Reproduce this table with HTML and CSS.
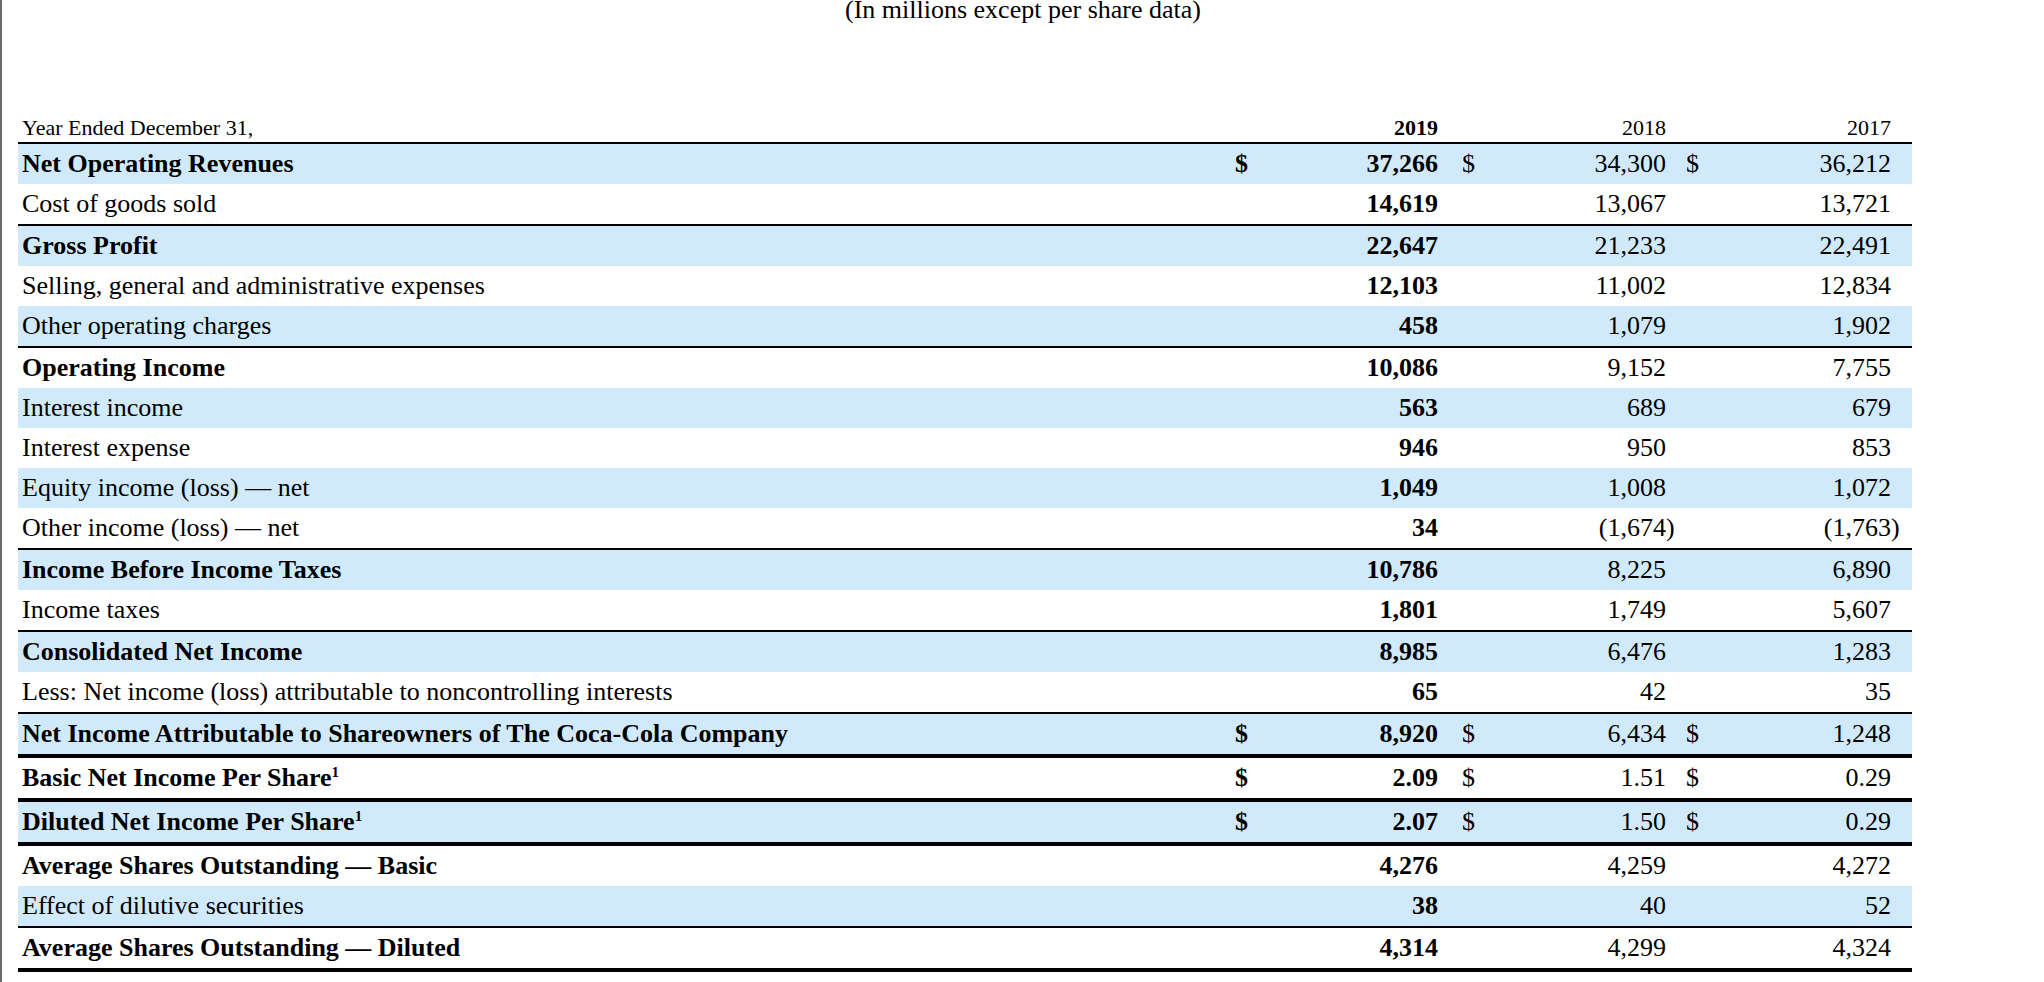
FILE: index.html
```html
<!DOCTYPE html>
<html lang="en">
<head>
<meta charset="utf-8">
<title>Consolidated Statements of Income</title>
<link rel="stylesheet" href="styles.css">
</head>
<body>
<div class="page">
  <div class="title">(In millions except per share data)</div>
  <div class="wrap">
    <table class="fin">
      <colgroup>
        <col class="c-label">
        <col class="c-d1">
        <col class="c-v1">
        <col class="c-d2">
        <col class="c-v2">
        <col class="c-d3">
        <col class="c-v3">
      </colgroup>
      <thead>
        <tr>
          <th class="lbl">Year Ended December 31,</th>
          <th></th>
          <th class="num b">2019</th>
          <th></th>
          <th class="num">2018</th>
          <th></th>
          <th class="num last">2017</th>
        </tr>
      </thead>
      <tbody>
        <tr class="alt b">
          <td class="lbl">Net Operating Revenues</td>
          <td class="d1">$</td><td class="num v1">37,266</td>
          <td class="d2">$</td><td class="num">34,300</td>
          <td class="d3">$</td><td class="num last">36,212</td>
        </tr>
        <tr>
          <td class="lbl">Cost of goods sold</td>
          <td></td><td class="num v1">14,619</td>
          <td></td><td class="num">13,067</td>
          <td></td><td class="num last">13,721</td>
        </tr>
        <tr class="alt b top">
          <td class="lbl">Gross Profit</td>
          <td></td><td class="num v1">22,647</td>
          <td></td><td class="num">21,233</td>
          <td></td><td class="num last">22,491</td>
        </tr>
        <tr>
          <td class="lbl">Selling, general and administrative expenses</td>
          <td></td><td class="num v1">12,103</td>
          <td></td><td class="num">11,002</td>
          <td></td><td class="num last">12,834</td>
        </tr>
        <tr class="alt">
          <td class="lbl">Other operating charges</td>
          <td></td><td class="num v1">458</td>
          <td></td><td class="num">1,079</td>
          <td></td><td class="num last">1,902</td>
        </tr>
        <tr class="b top">
          <td class="lbl">Operating Income</td>
          <td></td><td class="num v1">10,086</td>
          <td></td><td class="num">9,152</td>
          <td></td><td class="num last">7,755</td>
        </tr>
        <tr class="alt">
          <td class="lbl">Interest income</td>
          <td></td><td class="num v1">563</td>
          <td></td><td class="num">689</td>
          <td></td><td class="num last">679</td>
        </tr>
        <tr>
          <td class="lbl">Interest expense</td>
          <td></td><td class="num v1">946</td>
          <td></td><td class="num">950</td>
          <td></td><td class="num last">853</td>
        </tr>
        <tr class="alt">
          <td class="lbl">Equity income (loss) — net</td>
          <td></td><td class="num v1">1,049</td>
          <td></td><td class="num">1,008</td>
          <td></td><td class="num last">1,072</td>
        </tr>
        <tr>
          <td class="lbl">Other income (loss) — net</td>
          <td></td><td class="num v1">34</td>
          <td></td><td class="num">(1,674<span class="cp">)</span></td>
          <td></td><td class="num last">(1,763<span class="cp">)</span></td>
        </tr>
        <tr class="alt b top">
          <td class="lbl">Income Before Income Taxes</td>
          <td></td><td class="num v1">10,786</td>
          <td></td><td class="num">8,225</td>
          <td></td><td class="num last">6,890</td>
        </tr>
        <tr>
          <td class="lbl">Income taxes</td>
          <td></td><td class="num v1">1,801</td>
          <td></td><td class="num">1,749</td>
          <td></td><td class="num last">5,607</td>
        </tr>
        <tr class="alt b top">
          <td class="lbl">Consolidated Net Income</td>
          <td></td><td class="num v1">8,985</td>
          <td></td><td class="num">6,476</td>
          <td></td><td class="num last">1,283</td>
        </tr>
        <tr>
          <td class="lbl">Less: Net income (loss) attributable to noncontrolling interests</td>
          <td></td><td class="num v1">65</td>
          <td></td><td class="num">42</td>
          <td></td><td class="num last">35</td>
        </tr>
        <tr class="alt b top thick">
          <td class="lbl">Net Income Attributable to Shareowners of The Coca-Cola Company</td>
          <td class="d1">$</td><td class="num v1">8,920</td>
          <td class="d2">$</td><td class="num">6,434</td>
          <td class="d3">$</td><td class="num last">1,248</td>
        </tr>
        <tr class="b thick">
          <td class="lbl">Basic Net Income Per Share<sup>1</sup></td>
          <td class="d1">$</td><td class="num v1">2.09</td>
          <td class="d2">$</td><td class="num">1.51</td>
          <td class="d3">$</td><td class="num last">0.29</td>
        </tr>
        <tr class="alt b thick">
          <td class="lbl">Diluted Net Income Per Share<sup>1</sup></td>
          <td class="d1">$</td><td class="num v1">2.07</td>
          <td class="d2">$</td><td class="num">1.50</td>
          <td class="d3">$</td><td class="num last">0.29</td>
        </tr>
        <tr class="b">
          <td class="lbl">Average Shares Outstanding — Basic</td>
          <td></td><td class="num v1">4,276</td>
          <td></td><td class="num">4,259</td>
          <td></td><td class="num last">4,272</td>
        </tr>
        <tr class="alt">
          <td class="lbl">Effect of dilutive securities</td>
          <td></td><td class="num v1">38</td>
          <td></td><td class="num">40</td>
          <td></td><td class="num last">52</td>
        </tr>
        <tr class="b top thick">
          <td class="lbl">Average Shares Outstanding — Diluted</td>
          <td></td><td class="num v1">4,314</td>
          <td></td><td class="num">4,299</td>
          <td></td><td class="num last">4,324</td>
        </tr>
      </tbody>
    </table>
  </div>
</div>
</body>
</html>
```
FILE: styles.css
```css
html, body {
  margin: 0;
  padding: 0;
  background: #ffffff;
}

body {
  font-family: "Liberation Serif", "Times New Roman", serif;
  color: #000000;
}

.page {
  min-height: 982px;
  border-left: 2px solid #6a6a6a;
  box-sizing: border-box;
  overflow: hidden;
}

.title {
  font-size: 26px;
  line-height: 30px;
  margin-top: -5px;
  text-align: center;
}

.wrap {
  padding-left: 16px;
  margin-top: 75px;
}

.fin {
  table-layout: fixed;
  width: 1894px;
  border-collapse: separate;
  border-spacing: 0;
}

.c-label { width: 1207px; }
.c-d1 { width: 35px; }
.c-v1 { width: 190px; }
.c-d2 { width: 30px; }
.c-v2 { width: 198px; }
.c-d3 { width: 28px; }
.c-v3 { width: 206px; }

.fin th {
  font-size: 22px;
  line-height: 24px;
  font-weight: normal;
  padding: 16px 12px 2px 0;
  text-align: left;
  vertical-align: bottom;
  border-bottom: 2px solid #000;
  white-space: nowrap;
}

.fin th.b { font-weight: bold; }

.fin td {
  font-size: 26px;
  line-height: 30px;
  padding: 5px 12px 5px 0;
  white-space: nowrap;
  vertical-align: middle;
}

.fin .lbl {
  padding-left: 4px;
  padding-right: 0;
  text-align: left;
}

.fin .num {
  text-align: right;
}

.fin .last {
  padding-right: 21px;
}

.fin td.d1 { padding-left: 10px; padding-right: 0; font-weight: bold; }
.fin td.d2 { padding-left: 12px; padding-right: 0; }
.fin td.d3 { padding-left: 8px; padding-right: 0; }

.fin td.v1 { font-weight: bold; }

.fin tr.b td.lbl { font-weight: bold; }

.fin tr.alt td { background: #d0eafc; }

.fin tr.top td { border-top: 2px solid #000; }

.fin tr.thick td { border-bottom: 4px solid #000; }

.cp {
  margin-right: -0.333em;
}

.fin sup {
  font-size: 15px;
  line-height: 0;
  vertical-align: 9px;
}
```
